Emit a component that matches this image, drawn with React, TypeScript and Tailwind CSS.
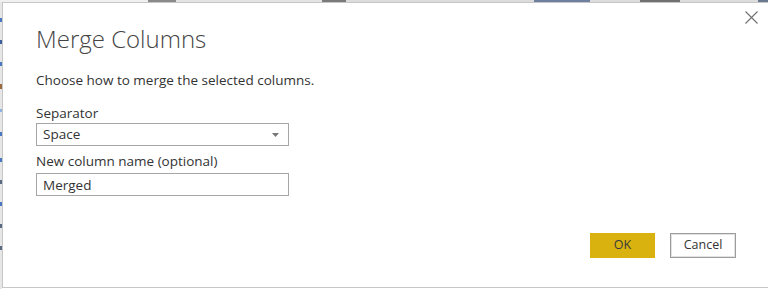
import React from 'react';

// Little clipped bits of the table that sits behind the dialog
const TopStrip: React.FC = () => (
  <div className="flex h-[2px] w-full bg-[#e8e8e8]">
    <div className="w-[148px] bg-[#f0f0f0]" />
    <div className="w-[28px] bg-[#8a8a8a]" />
    <div className="w-[146px] bg-[#e4e4e4]" />
    <div className="w-[24px] bg-[#7a7a7a]" />
    <div className="w-[188px] bg-[#dcdcdc]" />
    <div className="w-[56px] bg-[#6e7fa0]" />
    <div className="w-[50px] bg-[#dcdcdc]" />
    <div className="w-[40px] bg-[#707070]" />
    <div className="w-[78px] bg-[#dcdcdc]" />
    <div className="flex-1 bg-[#6a7890]" />
  </div>
);

const LeftStrip: React.FC = () => (
  <div className="flex w-[2px] flex-col bg-[#e6e6e6]">
    <div className="h-[16px]" />
    <div className="h-[4px] bg-[#4a78c0]" />
    <div className="h-[18px]" />
    <div className="h-[4px] bg-[#3d5f9c]" />
    <div className="h-[18px]" />
    <div className="h-[4px] bg-[#4a78c0]" />
    <div className="h-[18px]" />
    <div className="h-[5px] bg-[#9a6a40]" />
    <div className="h-[20px]" />
    <div className="h-[3px] bg-[#8fb3e0]" />
    <div className="h-[20px]" />
    <div className="h-[4px] bg-[#4a78c0]" />
    <div className="h-[22px]" />
    <div className="h-[4px] bg-[#4a78c0]" />
    <div className="h-[18px]" />
    <div className="h-[4px] bg-[#5a6a80]" />
    <div className="h-[18px]" />
    <div className="h-[4px] bg-[#4a78c0]" />
    <div className="h-[18px]" />
    <div className="h-[4px] bg-[#5a6a80]" />
    <div className="h-[18px]" />
    <div className="h-[4px] bg-[#5a6a80]" />
  </div>
);

const MergeColumnsDialog: React.FC = () => {
  return (
    <div className="relative flex h-[286px] flex-1 flex-col border-l border-t border-b border-[#c6c6c6] bg-white text-[#333]">
      {/* close button */}
      <button className="absolute right-[10px] top-[8px] p-0 text-[#707070]" aria-label="Close">
        <svg width="13" height="13" viewBox="0 0 13 13">
          <path d="M0.5 0.5 L12.5 12.5 M12.5 0.5 L0.5 12.5" stroke="currentColor" strokeWidth="1.1" />
        </svg>
      </button>

      <div className="pl-[33px] pt-[20px]">
        <h1 className="text-[24px] font-light leading-[32px] text-[#444]">Merge Columns</h1>
        <p className="mt-[15px] text-[13.5px] leading-[20px]">Choose how to merge the selected columns.</p>

        <label className="mt-[13px] block text-[13.5px] leading-[20px]">Separator</label>
        <div className="flex h-[23px] w-[253px] items-center justify-between border border-[#a6a6a6] pl-[6px] pr-[9px]">
          <span className="text-[13.5px]">Space</span>
          <svg width="7" height="4" viewBox="0 0 7 4">
            <path d="M0 0 H7 L3.5 4 Z" fill="#777" />
          </svg>
        </div>

        <label className="mt-[5px] block text-[13.5px] leading-[20px]">New column name (optional)</label>
        <input
          defaultValue="Merged"
          className="mt-[2px] block h-[23px] w-[253px] border border-[#a6a6a6] px-[6px] text-[13.5px] text-[#333] outline-none"
        />
      </div>

      <div className="mt-auto flex justify-end gap-[15px] pb-[29px] pr-[32px]">
        <button className="h-[25px] w-[65px] bg-[#d9b20f] text-[12.5px] text-[#3a3a3a]">OK</button>
        <button className="h-[25px] w-[66px] border border-[#9c9c9c] bg-white text-[12.5px] text-[#333] shadow-[inset_0_0_0_1px_#e2e2e2]">
          Cancel
        </button>
      </div>
    </div>
  );
};

export default function App() {
  return (
    <div className="flex h-[289px] w-[768px] flex-col overflow-hidden bg-white font-['Segoe_UI','Open_Sans',sans-serif]">
      <TopStrip />
      <div className="flex flex-1">
        <LeftStrip />
        <MergeColumnsDialog />
      </div>
    </div>
  );
}
